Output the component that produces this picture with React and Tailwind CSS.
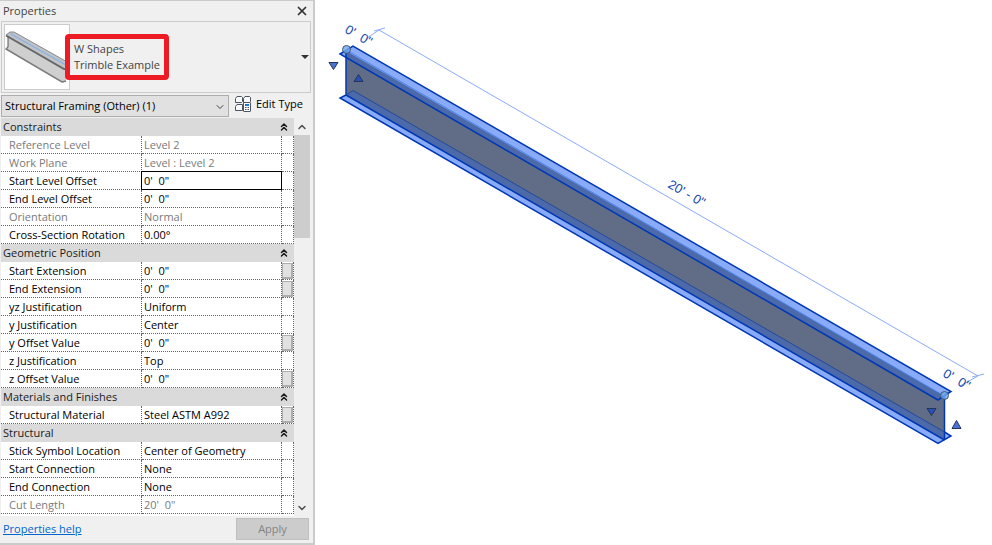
import { X, ChevronsUp, ChevronUp, ChevronDown } from "lucide-react"

const groups = [
  {
    title: "Constraints",
    rows: [
      { name: "Reference Level", value: "Level 2", locked: true },
      { name: "Work Plane", value: "Level : Level 2", locked: true },
      { name: "Start Level Offset", value: "0'  0\"", active: true },
      { name: "End Level Offset", value: "0'  0\"" },
      { name: "Orientation", value: "Normal", locked: true },
      { name: "Cross-Section Rotation", value: "0.00°" },
    ],
  },
  {
    title: "Geometric Position",
    rows: [
      { name: "Start Extension", value: "0'  0\"", more: true },
      { name: "End Extension", value: "0'  0\"", more: true },
      { name: "yz Justification", value: "Uniform" },
      { name: "y Justification", value: "Center" },
      { name: "y Offset Value", value: "0'  0\"", more: true },
      { name: "z Justification", value: "Top" },
      { name: "z Offset Value", value: "0'  0\"", more: true },
    ],
  },
  {
    title: "Materials and Finishes",
    rows: [{ name: "Structural Material", value: "Steel ASTM A992", more: true }],
  },
  {
    title: "Structural",
    rows: [
      { name: "Stick Symbol Location", value: "Center of Geometry" },
      { name: "Start Connection", value: "None" },
      { name: "End Connection", value: "None" },
      { name: "Cut Length", value: "20'  0\"", locked: true },
    ],
  },
]

function BeamThumbnail() {
  return (
    <svg viewBox="0 0 64 64" className="h-16 w-16" aria-hidden="true">
      <path d="M3 11 L61 43 L61 56 L58 58 L1 25 L3 22 Z" fill="#cfcfcf" />
      <path d="M3 22 L1 24 L57 57 L61 56" fill="none" stroke="#7c7c7c" strokeWidth="1.500" />
      <path d="M1 10 L5 7 L9 7 L64 38 L64 45 L59 44 Z" fill="#bfc3c8" />
      <path d="M1 10 L5 7 H9 L64 38" fill="none" stroke="#8a8a8a" />
      <path d="M1 10.500 L59 44 H64" fill="none" stroke="#686868" strokeWidth="2" />
      <path d="M5 8.500 L62 40.500" stroke="#86b0e4" strokeWidth="1.200" />
      <path d="M3 12 V22" stroke="#555" />
    </svg>
  )
}

function EditTypeIcon() {
  return (
    <svg viewBox="0 0 16 16" className="h-4 w-4" fill="none" stroke="#4a5563" aria-hidden="true">
      <path d="M.5 2.500 L2 .5 H6.500 L7.500 1.500 V5.500 L6.500 6.500 H.5 Z" fill="#fafafa" />
      <path d="M8.500 2.500 L10 .5 H14.500 L15.500 1.500 V5.500 L14.500 6.500 H8.500 Z" fill="#fafafa" />
      <path d="M7.500 14.500 H.5 V10.500 L2 8.500 H7.500 Z" fill="#fafafa" />
      <rect x="8.500" y="6.500" width="7" height="9" rx=".5" fill="#fff" />
      <path d="M10 9 H14" stroke="#1f74cc" strokeWidth="2" />
      <path d="M10 11.500 H14 M10 13.500 H14" strokeDasharray="1 .5" />
    </svg>
  )
}

function PropertyRow({ row }) {
  const id = row.name.toLowerCase().replace(/ /g, "-")
  return (
    <tr className={row.locked ? "h-[18px] text-[#7a7a7a]" : "h-[18px] text-black"}>
      <th scope="row" className="border-b border-r border-dotted border-[#666] p-0 pl-2 text-left font-normal">
        <label htmlFor={id} className="block truncate">{row.name}</label>
      </th>
      <td className="border-b border-r border-dotted border-[#666] p-0">
        <input
          id={id}
          defaultValue={row.value}
          disabled={row.locked}
          className={
            row.active
              ? "block h-[17px] w-full px-[2px] outline-1 outline-black"
              : "block h-[17px] w-full px-[2px] outline-none"
          }
        />
      </td>
      <td className="border-b border-r border-dotted border-[#666] p-0">
        {row.more && (
          <button
            aria-label={`Associate ${row.name}`}
            className="block h-4 w-full border border-r-2 border-b-2 border-[#adadad] bg-[#e1e1e1]"
          />
        )}
      </td>
    </tr>
  )
}

function PropertyGroup({ group }) {
  return (
    <tbody>
      <tr className="h-[18px] bg-[#dadada] text-[#1a1a1a]">
        <th scope="colgroup" colSpan={3} className="p-0 pr-1 pl-[2px] font-normal">
          <button className="flex w-full items-center justify-between">
            {group.title}
            <ChevronsUp size={12} strokeWidth={3} />
          </button>
        </th>
      </tr>
      {group.rows.map((row) => (
        <PropertyRow key={row.name} row={row} />
      ))}
    </tbody>
  )
}

function PropertiesPanel() {
  return (
    <aside className="flex w-[315px] shrink-0 flex-col border-t border-r-2 border-b-2 border-[#cbcbcb] bg-[#f0f0f0] pl-px">
      <header className="flex h-5 items-center justify-between pr-1 pl-[2px] text-[#444]">
        <h1>Properties</h1>
        <button aria-label="Close">
          <X size={14} strokeWidth={3} className="text-[#333]" />
        </button>
      </header>

      {/* Type selector */}
      <button className="mr-[2px] flex h-[72px] items-center border border-[#cbcbcb] pr-px text-left">
        <span className="ml-[2px] border border-[#cbcbcb] bg-white">
          <BeamThumbnail />
        </span>
        <span className="z-10 -ml-[5px] rounded-sm border-[5px] border-[#ed1c24] px-1 py-[2px] text-[#444]">
          <span className="block">W Shapes</span>
          <span className="block">Trimble Example</span>
        </span>
        <svg viewBox="0 0 8 4" className="ml-auto h-1 w-2" aria-hidden="true">
          <path d="M0 0 H8 L4 4 Z" fill="#333" />
        </svg>
      </button>

      <div className="flex h-[25px] items-center gap-[6px]">
        <div className="relative w-[228px]">
          <select
            aria-label="Selection filter"
            className="block h-[22px] w-full appearance-none border border-[#adadad] bg-[#e1e1e1] px-[3px] text-black"
          >
            <option>Structural Framing (Other) (1)</option>
          </select>
          <ChevronDown size={12} className="pointer-events-none absolute top-[6px] right-[3px] text-[#444]" />
        </div>
        <button className="flex items-center gap-[5px] pb-1 text-black">
          <EditTypeIcon />
          Edit Type
        </button>
      </div>

      <div className="flex">
        <div className="w-[293px] bg-white pb-[2px]">
          <table className="w-full table-fixed border-separate border-spacing-0">
            <colgroup>
              <col className="w-[141px]" />
              <col />
              <col className="w-3" />
            </colgroup>
            {groups.map((group) => (
              <PropertyGroup key={group.title} group={group} />
            ))}
          </table>
        </div>
        <div className="flex w-4 flex-col items-center">
          <button aria-label="Scroll up" className="flex h-[17px] items-center">
            <ChevronUp size={12} strokeWidth={3} className="text-[#505050]" />
          </button>
          <div className="h-[103px] w-full bg-[#cdcdcd]" />
          <button aria-label="Scroll down" className="mt-auto flex h-[17px] items-center">
            <ChevronDown size={12} strokeWidth={3} className="text-[#505050]" />
          </button>
        </div>
      </div>

      <footer className="flex grow items-center justify-between pr-1 pb-[2px] pl-[2px]">
        <a href="#help" className="text-[#0066cc] underline">Properties help</a>
        <button disabled className="h-[22px] w-[73px] border border-[#bfbfbf] bg-[#cccccc] text-[#838383]">
          Apply
        </button>
      </footer>
    </aside>
  )
}

function BeamView() {
  return (
    <main className="min-w-0 grow bg-white">
      <svg viewBox="315 0 677 545" className="block w-full" role="img" aria-label="Selected beam">
        {/* Bottom flange */}
        <path d="M340 98 L353 90.500 L951 436 L938 443.500 Z" fill="#8aabf8" />
        {/* Web */}
        <path d="M346 50 L944.500 396 V440 L346 95 Z" fill="#616c86" />
        <path d="M353 90.500 L944.500 432 V440 L346 95 Z" fill="#4c69a9" />
        <path d="M346 57.500 V50 L944.500 396 L938 400 Z" fill="#4c69a9" />
        {/* Top flange */}
        <path d="M340 54 L353 46 L951 391.500 L944.500 396 L346 51 L346 57.500 Z" fill="#8aabf8" />
        <g fill="none" stroke="#0038b4" strokeWidth="1.500">
          <path d="M340 54 L353 46 L951 391.500 L938 400 Z" />
          <path d="M346 95 L340 98 L938 443.500 L951 436 L944.500 432" />
          <path d="M346 95 L944.500 440" />
          <path d="M346 50 V95 M944.500 396 V440" />
        </g>
        <path d="M346 95 L353 90.500 L944.500 432" fill="none" stroke="#244a9c" />
        <path d="M346 50 L944.500 396" stroke="#4a82ea" />

        {/* Dimension line */}
        <g stroke="#8aabf8" fill="none">
          <path d="M379 30 L978 376" />
          <path d="M367 38 L379 30 M374 31 L385 28 M960 386 L978 376 M972 377 L984 374" />
        </g>
        <g fill="#1446b0" fontFamily="Liberation Sans" fontSize="13">
          <text transform="translate(344 32) rotate(30)" xmlSpace="preserve">0'  0"</text>
          <text transform="translate(667 187) rotate(30)">20' - 0"</text>
          <text transform="translate(942 376) rotate(30)" xmlSpace="preserve">0'  0"</text>
        </g>

        {/* Grips */}
        <g fill="#6ea6ee" fillOpacity="0.800" stroke="#44546a">
          <circle cx="346.500" cy="49.500" r="4" />
          <circle cx="944.500" cy="395.500" r="4" />
        </g>
        <g fill="#4a72d4" stroke="#26345a">
          <path d="M329 62.500 H338 L333.500 69.500 Z" />
          <path d="M354 81.500 H363 L358.500 74.500 Z" fill="#2850b4" />
          <path d="M927 408.500 H936 L931.500 415.500 Z" fill="#2850b4" />
          <path d="M952 428.500 H961 L956.500 420.500 Z" />
        </g>
      </svg>
    </main>
  )
}

export default function App() {
  return (
    <div className="flex min-h-screen bg-white font-['Open_Sans',sans-serif] text-[11px] leading-4">
      <PropertiesPanel />
      <BeamView />
    </div>
  )
}
